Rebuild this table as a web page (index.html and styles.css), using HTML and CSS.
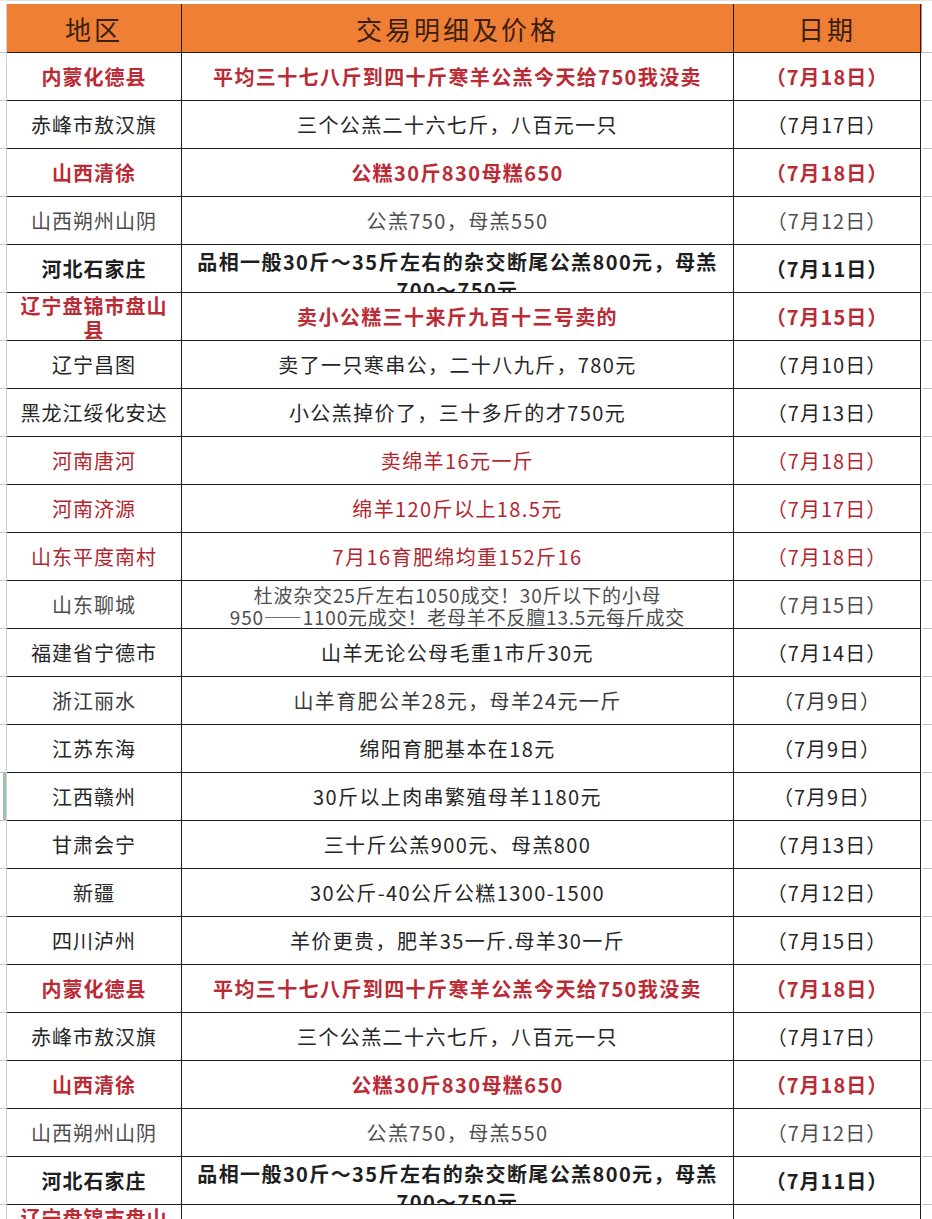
FILE: index.html
```html
<!DOCTYPE html>
<html lang="zh-CN">
<head>
<meta charset="utf-8">
<title>羊价交易明细</title>
<link rel="stylesheet" href="styles.css">
</head>
<body>
<div class="sheet">
  <div class="gutter gutter-left"><span class="sel-mark"></span></div>
  <div class="table">
    <div class="row head">
      <div class="cell">地区</div>
      <div class="cell">交易明细及价格</div>
      <div class="cell">日期</div>
    </div>
    <div class="row red-bold">
      <div class="cell">内蒙化德县</div>
      <div class="cell">平均三十七八斤到四十斤寒羊公羔今天给750我没卖</div>
      <div class="cell">（7月18日）</div>
    </div>
    <div class="row">
      <div class="cell">赤峰市敖汉旗</div>
      <div class="cell">三个公羔二十六七斤，八百元一只</div>
      <div class="cell">（7月17日）</div>
    </div>
    <div class="row red-bold">
      <div class="cell">山西清徐</div>
      <div class="cell">公糕30斤830母糕650</div>
      <div class="cell">（7月18日）</div>
    </div>
    <div class="row gray">
      <div class="cell">山西朔州山阴</div>
      <div class="cell">公羔750，母羔550</div>
      <div class="cell">（7月12日）</div>
    </div>
    <div class="row black-bold">
      <div class="cell">河北石家庄</div>
      <div class="cell wrap wrap-bold">品相一般30斤～35斤左右的杂交断尾公羔800元，母羔<br>700～750元</div>
      <div class="cell">（7月11日）</div>
    </div>
    <div class="row red-bold">
      <div class="cell wrap wrap-region">辽宁盘锦市盘山<br>县</div>
      <div class="cell">卖小公糕三十来斤九百十三号卖的</div>
      <div class="cell">（7月15日）</div>
    </div>
    <div class="row">
      <div class="cell">辽宁昌图</div>
      <div class="cell">卖了一只寒串公，二十八九斤，780元</div>
      <div class="cell">（7月10日）</div>
    </div>
    <div class="row">
      <div class="cell">黑龙江绥化安达</div>
      <div class="cell">小公羔掉价了，三十多斤的才750元</div>
      <div class="cell">（7月13日）</div>
    </div>
    <div class="row red">
      <div class="cell">河南唐河</div>
      <div class="cell">卖绵羊16元一斤</div>
      <div class="cell">（7月18日）</div>
    </div>
    <div class="row red">
      <div class="cell">河南济源</div>
      <div class="cell">绵羊120斤以上18.5元</div>
      <div class="cell">（7月17日）</div>
    </div>
    <div class="row red">
      <div class="cell">山东平度南村</div>
      <div class="cell">7月16育肥绵均重152斤16</div>
      <div class="cell">（7月18日）</div>
    </div>
    <div class="row gray">
      <div class="cell">山东聊城</div>
      <div class="cell wrap wrap-small">杜波杂交25斤左右1050成交！30斤以下的小母<br>950——1100元成交！老母羊不反膻13.5元每斤成交</div>
      <div class="cell">（7月15日）</div>
    </div>
    <div class="row">
      <div class="cell">福建省宁德市</div>
      <div class="cell">山羊无论公母毛重1市斤30元</div>
      <div class="cell">（7月14日）</div>
    </div>
    <div class="row dim">
      <div class="cell">浙江丽水</div>
      <div class="cell">山羊育肥公羊28元，母羊24元一斤</div>
      <div class="cell">（7月9日）</div>
    </div>
    <div class="row">
      <div class="cell">江苏东海</div>
      <div class="cell">绵阳育肥基本在18元</div>
      <div class="cell">（7月9日）</div>
    </div>
    <div class="row">
      <div class="cell">江西赣州</div>
      <div class="cell">30斤以上肉串繁殖母羊1180元</div>
      <div class="cell">（7月9日）</div>
    </div>
    <div class="row">
      <div class="cell">甘肃会宁</div>
      <div class="cell">三十斤公羔900元、母羔800</div>
      <div class="cell">（7月13日）</div>
    </div>
    <div class="row">
      <div class="cell">新疆</div>
      <div class="cell">30公斤-40公斤公糕1300-1500</div>
      <div class="cell">（7月12日）</div>
    </div>
    <div class="row">
      <div class="cell">四川泸州</div>
      <div class="cell">羊价更贵，肥羊35一斤.母羊30一斤</div>
      <div class="cell">（7月15日）</div>
    </div>
    <div class="row red-bold">
      <div class="cell">内蒙化德县</div>
      <div class="cell">平均三十七八斤到四十斤寒羊公羔今天给750我没卖</div>
      <div class="cell">（7月18日）</div>
    </div>
    <div class="row">
      <div class="cell">赤峰市敖汉旗</div>
      <div class="cell">三个公羔二十六七斤，八百元一只</div>
      <div class="cell">（7月17日）</div>
    </div>
    <div class="row red-bold">
      <div class="cell">山西清徐</div>
      <div class="cell">公糕30斤830母糕650</div>
      <div class="cell">（7月18日）</div>
    </div>
    <div class="row gray">
      <div class="cell">山西朔州山阴</div>
      <div class="cell">公羔750，母羔550</div>
      <div class="cell">（7月12日）</div>
    </div>
    <div class="row black-bold">
      <div class="cell">河北石家庄</div>
      <div class="cell wrap wrap-bold">品相一般30斤～35斤左右的杂交断尾公羔800元，母羔<br>700～750元</div>
      <div class="cell">（7月11日）</div>
    </div>
    <div class="row red-bold">
      <div class="cell wrap wrap-region">辽宁盘锦市盘山<br>县</div>
      <div class="cell">卖小公糕三十来斤九百十三号卖的</div>
      <div class="cell">（7月15日）</div>
    </div>
  </div>
  <div class="gutter gutter-right"></div>
</div>
</body>
</html>
```

FILE: styles.css
```css
* {
  box-sizing: border-box;
}

html, body {
  margin: 0;
  padding: 0;
  background: #ffffff;
}

body {
  font-family: "Noto Sans CJK SC", "Noto Sans", sans-serif;
  color: #222222;
  overflow: hidden;
  height: 1219px;
}

.sheet {
  display: flex;
  padding-top: 3px;
  border-top: 1px solid #e4e4e4;
}

.gutter {
  flex: none;
  position: relative;
  background-image: repeating-linear-gradient(to bottom, transparent 0, transparent 47px, #c4c4c4 47px, #c4c4c4 48px);
  background-position: 0 1px;
}

.gutter-left {
  width: 7px;
  border-right: 1px solid #d0d0d0;
}

.gutter-right {
  width: 10px;
}

.sel-mark {
  position: absolute;
  left: 3px;
  top: 768px;
  width: 3px;
  height: 48px;
  background: #9cc3a8;
}

.table {
  flex: none;
  width: 915px;
  display: flex;
  flex-direction: column;
}

.row {
  display: grid;
  grid-template-columns: 175px 552px 187px;
  height: 48px;
  font-size: 20px;
  letter-spacing: 1px;
  color: #262626;
}

.cell {
  display: flex;
  align-items: center;
  justify-content: center;
  text-align: center;
  border-right: 1px solid #1c1c1c;
  border-bottom: 1px solid #1c1c1c;
  overflow: hidden;
  white-space: nowrap;
  line-height: 1.2;
}

.row .cell:nth-child(2) {
  font-size: 20px;
  letter-spacing: 1.4px;
}

.head {
  height: 49px;
  background: #ee7f35;
  font-size: 26px;
  letter-spacing: 3px;
  color: #3a2012;
}

.head .cell:nth-child(2) {
  font-size: 26px;
  letter-spacing: 3px;
}

.head .cell {
  padding-top: 2px;
}

.red-bold {
  color: #bb2b36;
  font-weight: 700;
}

.black-bold {
  color: #1e1e1e;
  font-weight: 700;
}

.red {
  color: #b3262e;
}

.gray {
  color: #4e4e4e;
}

.dim {
  color: #3a3a3a;
}

.wrap {
  align-items: flex-start;
  white-space: normal;
}

.wrap-bold {
  padding-top: 3px;
  line-height: 28px;
}

.wrap-region {
  padding-top: 1px;
  line-height: 24px;
}

.wrap-small {
  padding-top: 3px;
  line-height: 22px;
  font-size: 19px !important;
  letter-spacing: 0.8px !important;
}
```
